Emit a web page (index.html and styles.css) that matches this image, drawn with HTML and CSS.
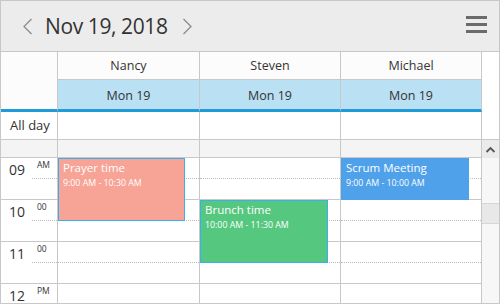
FILE: index.html
```html
<!DOCTYPE html>
<html>
<head>
<meta charset="utf-8">
<link rel="stylesheet" href="styles.css">
</head>
<body>
<div class="cal">
  <div class="toolbar">
    <span class="nav prev"><svg width="11" height="17" viewBox="0 0 11 17"><polyline points="9.5,1 2,8.5 9.5,16" fill="none" stroke="#8c8c8c" stroke-width="1.3"/></svg></span>
    <span class="title">Nov 19, 2018</span>
    <span class="nav next"><svg width="11" height="17" viewBox="0 0 11 17"><polyline points="1.5,1 9,8.5 1.5,16" fill="none" stroke="#8c8c8c" stroke-width="1.3"/></svg></span>
    <span class="menu"><i></i><i></i><i></i></span>
  </div>
  <div class="head">
    <div class="corner"></div>
    <div class="rescol"><div class="res">Nancy</div><div class="date">Mon 19</div></div>
    <div class="rescol"><div class="res">Steven</div><div class="date">Mon 19</div></div>
    <div class="rescol"><div class="res">Michael</div><div class="date">Mon 19</div></div>
    <div class="sbhead"></div>
  </div>
  <div class="allday">
    <div class="adlabel">All day</div>
    <div class="adcell"></div>
    <div class="adcell"></div>
    <div class="adcell"></div>
    <div class="sbhead"></div>
  </div>
  <div class="body">
    <div class="timecol">
      <div class="gray"></div>
      <div class="hour"><div class="top"><span class="hh">09</span><span class="mm">AM</span></div><div class="dots"></div><div class="bot"></div></div>
      <div class="hour"><div class="top"><span class="hh">10</span><span class="mm">00</span></div><div class="dots"></div><div class="bot"></div></div>
      <div class="hour"><div class="top"><span class="hh">11</span><span class="mm">00</span></div><div class="dots"></div><div class="bot"></div></div>
      <div class="hour"><div class="top"><span class="hh">12</span><span class="mm">PM</span></div><div class="dots"></div><div class="bot"></div></div>
    </div>
    <div class="daycol">
      <div class="gray"></div>
      <div class="half"></div><div class="half full"></div>
      <div class="half"></div><div class="half full"></div>
      <div class="half"></div><div class="half full"></div>
      <div class="half"></div><div class="half full"></div>
      <div class="event prayer" style="top:18px;height:63px"><div class="etitle">Prayer time</div><div class="etime">9:00 AM - 10:30 AM</div></div>
    </div>
    <div class="daycol">
      <div class="gray"></div>
      <div class="half"></div><div class="half full"></div>
      <div class="half"></div><div class="half full"></div>
      <div class="half"></div><div class="half full"></div>
      <div class="half"></div><div class="half full"></div>
      <div class="event brunch" style="top:60px;height:63px"><div class="etitle">Brunch time</div><div class="etime">10:00 AM - 11:30 AM</div></div>
    </div>
    <div class="daycol">
      <div class="gray"></div>
      <div class="half"></div><div class="half full"></div>
      <div class="half"></div><div class="half full"></div>
      <div class="half"></div><div class="half full"></div>
      <div class="half"></div><div class="half full"></div>
      <div class="event scrum" style="top:18px;height:42px"><div class="etitle">Scrum Meeting</div><div class="etime">9:00 AM - 10:00 AM</div></div>
    </div>
    <div class="scrollbar">
      <div class="sbtn"><svg width="11" height="7" viewBox="0 0 11 7"><polyline points="1.5,6 5.5,2 9.5,6" fill="none" stroke="#555" stroke-width="1.8"/></svg></div>
      <div class="track">
        <div class="thumb"></div>
      </div>
      <div class="sbtn"><svg width="11" height="7" viewBox="0 0 11 7"><polyline points="1.5,1 5.5,5 9.5,1" fill="none" stroke="#555" stroke-width="1.8"/></svg></div>
    </div>
  </div>
</div>
</body>
</html>
```
FILE: styles.css
```css
* { box-sizing: border-box; }
html, body { margin: 0; padding: 0; background: #fff; }
body { font-family: "Open Sans", "Noto Sans", sans-serif; color: #333; }

.cal {
  width: 500px;
  height: 304px;
  border: 1px solid #c8c8c8;
  display: flex;
  flex-direction: column;
  overflow: hidden;
}

.toolbar {
  height: 51px;
  flex: none;
  background: #ececec;
  border-bottom: 1px solid #c8c8c8;
  display: flex;
  align-items: center;
  padding-left: 21px;
}
.nav { display: flex; align-items: center; height: 17px; }
.nav svg { display: block; }
.title {
  font-size: 21px;
  color: #333;
  margin: 0 14px 0 12px;
  letter-spacing: -0.4px;
  line-height: 28px;
}
.menu {
  margin-left: auto;
  margin-right: 12px;
  width: 21px;
  display: flex;
  flex-direction: column;
  gap: 4px;
  margin-top: -3px;
}
.menu i { display: block; height: 3px; background: #6b6b6b; }

.head {
  height: 60px;
  flex: none;
  display: grid;
  grid-template-columns: 57px 142px 141px 141px 17px;
}
.corner {
  border-right: 1px solid #c8c8c8;
  border-bottom: 3px solid #1f9bd7;
  background: #fcfcfc;
}
.rescol {
  border-right: 1px solid #c8c8c8;
  border-bottom: 3px solid #1f9bd7;
  display: flex;
  flex-direction: column;
}
.res {
  height: 28px;
  border-bottom: 1px solid #c8c8c8;
  background: #fcfcfc;
  font-size: 12.5px;
  display: flex;
  align-items: center;
  justify-content: center;
}
.date {
  height: 29px;
  background: #bae0f3;
  font-size: 12.5px;
  display: flex;
  align-items: center;
  justify-content: center;
  padding-top: 1px;
}
.sbhead { background: #fff; }

.allday {
  height: 28px;
  flex: none;
  display: grid;
  grid-template-columns: 57px 142px 141px 141px 17px;
  border-bottom: 1px solid #c8c8c8;
}
.adlabel {
  border-right: 1px solid #c8c8c8;
  font-size: 13px;
  padding-left: 9px;
  display: flex;
  align-items: center;
  padding-bottom: 1px;
}
.adcell { border-right: 1px solid #c8c8c8; }

.body {
  height: 163px;
  flex: none;
  display: grid;
  grid-template-columns: 57px 142px 141px 141px 17px;
  overflow: hidden;
}
.gray {
  height: 18px;
  background: #f4f4f4;
  border-bottom: 1px solid #c8c8c8;
}
.timecol { border-right: 1px solid #c8c8c8; }
.hour {
  height: 42px;
  border-bottom: 1px solid #c8c8c8;
}
.hour .top {
  height: 20px;
  display: flex;
  align-items: flex-start;
}
.hh {
  font-size: 14px;
  padding-left: 8px;
  width: 36px;
  line-height: 18px;
  margin-top: 3px;
}
.mm {
  font-size: 8.5px;
  line-height: 10px;
  margin-top: 2px;
}
.dots {
  height: 1px;
  margin-left: 31px;
  border-top: 1px dotted #bdbdbd;
}
.hour .bot { height: 20px; }

.daycol {
  position: relative;
  border-right: 1px solid #c8c8c8;
}
.half {
  height: 21px;
  border-bottom: 1px dotted #bdbdbd;
}
.half.full { border-bottom: 1px solid #c8c8c8; }

.event {
  position: absolute;
  left: 0;
  width: 127px;
  color: #fff;
  padding: 1px 4px;
  border: 1px solid #3aaeee;
}
.prayer { background: #f7a396; }
.brunch { background: #56c77f; width: 128px; }
.scrum { background: #4fa1ea; border-color: #4fa1ea; width: 128px; }
.etitle { font-size: 11.5px; line-height: 16px; }
.etime { font-size: 8.8px; line-height: 14px; }

.scrollbar {
  background: #f7f7f7;
  display: flex;
  flex-direction: column;
}
.sbtn {
  height: 18px;
  flex: none;
  background: #ebebeb;
  display: flex;
  align-items: center;
  justify-content: center;
}
.track {
  flex: 1;
  padding-top: 45px;
}
.thumb {
  height: 21px;
  background: #e8e8e8;
  border-top: 1px solid #d6d6d6;
  border-bottom: 1px solid #d6d6d6;
}
```
